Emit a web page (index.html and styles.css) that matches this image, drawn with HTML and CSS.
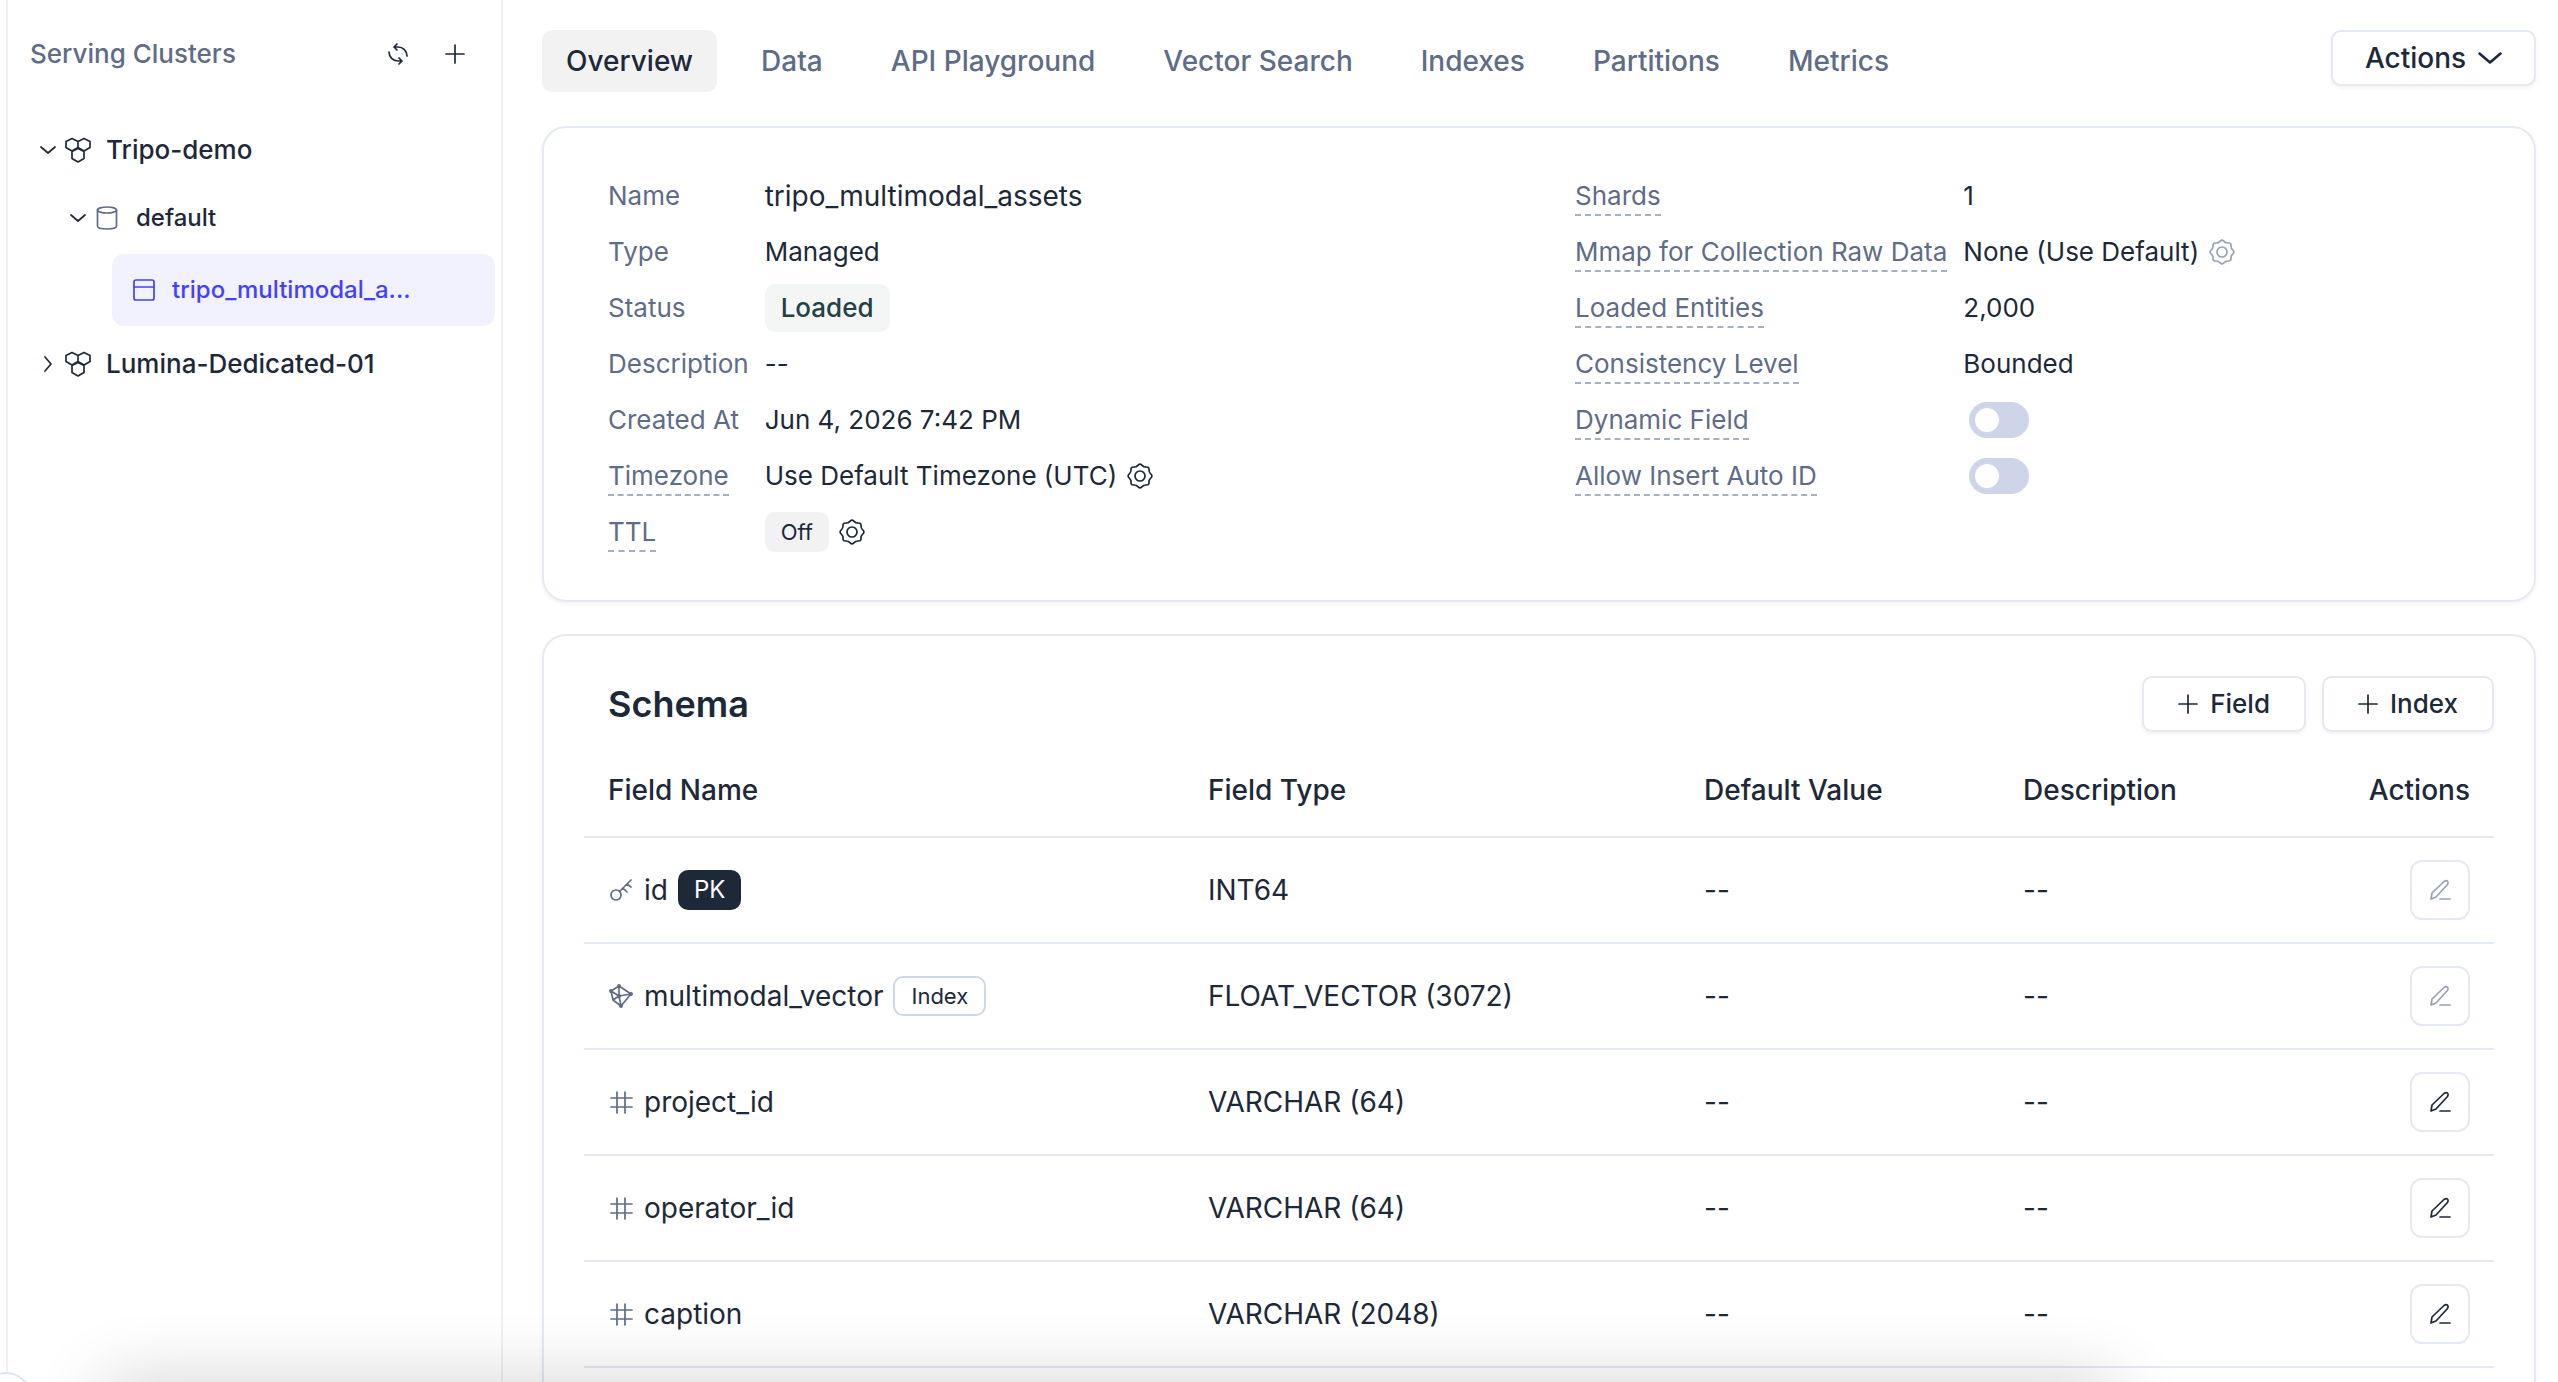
FILE: index.html
```
<!DOCTYPE html>
<html lang="en">
<head>
    <meta charset="utf-8">
    <title>tripo_multimodal_assets</title>
    <link rel="stylesheet" href="styles.css">
</head>
<body>
    <svg class="sprite" aria-hidden="true">
        <symbol id="i-down" viewBox="0 0 16 8"><path d="M1 1l7 6 7-6"/></symbol>
        <symbol id="i-right" viewBox="0 0 8 16"><path d="M1 1l6 7-6 7"/></symbol>
        <symbol id="i-plus" viewBox="0 0 20 20"><path d="M10 1v18M1 10h18"/></symbol>
        <symbol id="i-refresh" viewBox="0 0 22 22">
            <path d="M10 1L7 4l3 3M7 4h4a9 9 0 0 1 9 9M12 21l3-3-3-3M15 18h-4a9 9 0 0 1-9-9"/>
        </symbol>
        <symbol id="i-cluster" viewBox="0 0 26 26">
            <path d="M7 1.500l6 3v6L7 14l-6-3.500v-6zM19 1.500l6 3v6L19 14l-6-3.500v-6zM13 11.500l6 3v7L13 25l-6-3.500v-7z"/>
        </symbol>
        <symbol id="i-database" viewBox="0 0 22 24">
            <ellipse cx="11" cy="4" rx="9.500" ry="3"/><path d="M1.500 4v16c0 4 19 4 19 0V4"/>
        </symbol>
        <symbol id="i-table" viewBox="0 0 24 22">
            <rect x="2" y="1" width="20" height="20" rx="2"/><path d="M2 8h20"/>
        </symbol>
        <symbol id="i-gear" viewBox="0 0 26 26">
            <path d="M23.900 11.200Q26 13 23.900 14.800Q21.800 16.600 22 19.400Q22.200 22.200 19.400 22Q16.600 21.800 14.800 23.900Q13 26 11.200 23.900Q9.400 21.800 6.600 22Q3.800 22.200 4 19.400Q4.200 16.600 2.100 14.800Q0 13 2.100 11.200Q4.200 9.400 4 6.600Q3.800 3.800 6.600 4Q9.400 4.200 11.200 2.100Q13 0 14.800 2.100Q16.600 4.200 19.400 4Q22.200 3.800 22 6.600Q21.800 9.400 23.900 11.200z"/><circle cx="13" cy="13" r="5"/>
        </symbol>
        <symbol id="i-key" viewBox="0 0 24 24">
            <circle cx="7" cy="17" r="5"/><path d="M10.500 13.500L22 2M14 10l4 4M18 6l4 3"/>
        </symbol>
        <symbol id="i-vector" viewBox="0 0 24 24">
            <path d="M10 2L2 7l2 9 8 6 10-12zM10 2v10l2 10M2 7l8 5 12-2M4 16l6-4"/>
            <path class="dots" d="M10 2h0M2 7h0M22 10h0M12 22h0M10 12h0"/>
        </symbol>
        <symbol id="i-hash" viewBox="0 0 24 24"><path d="M8 2v21M16 2v21M2 8h21M2 17h21"/></symbol>
        <symbol id="i-edit" viewBox="0 0 22 22">
            <path d="M2 20l1-6L15 2.500c3-2 5 0 3.500 3L7 18zM11 20h10"/>
        </symbol>
    </svg>

    <div class="app">
        <aside class="sidebar">
            <header class="sidebar-head">
                <h1 class="sidebar-title">Serving Clusters</h1>
                <button class="icon-btn" aria-label="Refresh"><svg class="icon refresh"><use href="#i-refresh"/></svg></button>
                <button class="icon-btn" aria-label="Add cluster"><svg class="icon add"><use href="#i-plus"/></svg></button>
            </header>
            <nav class="tree">
                <a class="node" href="#">
                    <span class="caret"><svg class="icon down"><use href="#i-down"/></svg></span>
                    <svg class="icon big"><use href="#i-cluster"/></svg>
                    <span>Tripo-demo</span>
                </a>
                <a class="node node-db" href="#">
                    <span class="caret"><svg class="icon down"><use href="#i-down"/></svg></span>
                    <svg class="icon muted db"><use href="#i-database"/></svg>
                    <span>default</span>
                </a>
                <a class="node node-active" href="#">
                    <svg class="icon table-icon"><use href="#i-table"/></svg>
                    <span>tripo_multimodal_a...</span>
                </a>
                <a class="node" href="#">
                    <span class="caret"><svg class="icon right"><use href="#i-right"/></svg></span>
                    <svg class="icon big"><use href="#i-cluster"/></svg>
                    <span>Lumina-Dedicated-01</span>
                </a>
            </nav>
        </aside>

        <main class="main">
            <div class="topbar">
                <nav class="tabs">
                    <a class="tab tab-active" href="#">Overview</a>
                    <a class="tab" href="#">Data</a>
                    <a class="tab" href="#">API Playground</a>
                    <a class="tab" href="#">Vector Search</a>
                    <a class="tab" href="#">Indexes</a>
                    <a class="tab" href="#">Partitions</a>
                    <a class="tab" href="#">Metrics</a>
                </nav>
                <button class="btn btn-actions">Actions <svg class="icon actions-down"><use href="#i-down"/></svg></button>
            </div>

            <section class="card info">
                <dl class="props">
                    <dt>Name</dt><dd class="name">tripo_multimodal_assets</dd>
                    <dt>Type</dt><dd>Managed</dd>
                    <dt>Status</dt><dd><span class="badge badge-loaded">Loaded</span></dd>
                    <dt>Description</dt><dd>--</dd>
                    <dt>Created At</dt><dd>Jun 4, 2026 7:42 PM</dd>
                    <dt><span class="hint">Timezone</span></dt>
                    <dd>Use Default Timezone (UTC) <button class="icon-btn" aria-label="Edit timezone"><svg class="icon big"><use href="#i-gear"/></svg></button></dd>
                    <dt><span class="hint">TTL</span></dt>
                    <dd><span class="badge badge-off">Off</span> <button class="icon-btn" aria-label="Edit TTL"><svg class="icon big"><use href="#i-gear"/></svg></button></dd>
                </dl>
                <dl class="props">
                    <dt><span class="hint">Shards</span></dt><dd>1</dd>
                    <dt><span class="hint">Mmap for Collection Raw Data</span></dt>
                    <dd>None (Use Default) <button class="icon-btn" aria-label="Edit mmap" disabled><svg class="icon big"><use href="#i-gear"/></svg></button></dd>
                    <dt><span class="hint">Loaded Entities</span></dt><dd>2,000</dd>
                    <dt><span class="hint">Consistency Level</span></dt><dd>Bounded</dd>
                    <dt><label class="hint" for="dynamic-field">Dynamic Field</label></dt>
                    <dd><input class="switch" type="checkbox" role="switch" id="dynamic-field"></dd>
                    <dt><label class="hint" for="auto-id">Allow Insert Auto ID</label></dt>
                    <dd><input class="switch" type="checkbox" role="switch" id="auto-id"></dd>
                </dl>
            </section>

            <section class="card schema">
                <header class="schema-head">
                    <h2>Schema</h2>
                    <button class="btn btn-add"><svg class="icon add-field"><use href="#i-plus"/></svg> Field</button>
                    <button class="btn btn-add"><svg class="icon add-field"><use href="#i-plus"/></svg> Index</button>
                </header>
                <table class="fields">
                    <colgroup>
                        <col class="col-name"><col class="col-type"><col class="col-default"><col class="col-desc"><col class="col-actions">
                    </colgroup>
                    <thead>
                        <tr><th>Field Name</th><th>Field Type</th><th>Default Value</th><th>Description</th><th>Actions</th></tr>
                    </thead>
                    <tbody>
                        <tr>
                            <td><div class="field"><svg class="icon muted type"><use href="#i-key"/></svg> id <span class="badge badge-pk">PK</span></div></td>
                            <td>INT64</td><td>--</td><td>--</td>
                            <td><button class="edit" aria-label="Edit id" disabled><svg class="icon pen"><use href="#i-edit"/></svg></button></td>
                        </tr>
                        <tr>
                            <td><div class="field"><svg class="icon muted type"><use href="#i-vector"/></svg> multimodal_vector <span class="badge badge-index">Index</span></div></td>
                            <td>FLOAT_VECTOR (3072)</td><td>--</td><td>--</td>
                            <td><button class="edit" aria-label="Edit multimodal_vector" disabled><svg class="icon pen"><use href="#i-edit"/></svg></button></td>
                        </tr>
                        <tr>
                            <td><div class="field"><svg class="icon muted type"><use href="#i-hash"/></svg> project_id</div></td>
                            <td>VARCHAR (64)</td><td>--</td><td>--</td>
                            <td><button class="edit" aria-label="Edit project_id"><svg class="icon pen"><use href="#i-edit"/></svg></button></td>
                        </tr>
                        <tr>
                            <td><div class="field"><svg class="icon muted type"><use href="#i-hash"/></svg> operator_id</div></td>
                            <td>VARCHAR (64)</td><td>--</td><td>--</td>
                            <td><button class="edit" aria-label="Edit operator_id"><svg class="icon pen"><use href="#i-edit"/></svg></button></td>
                        </tr>
                        <tr>
                            <td><div class="field"><svg class="icon muted type"><use href="#i-hash"/></svg> caption</div></td>
                            <td>VARCHAR (2048)</td><td>--</td><td>--</td>
                            <td><button class="edit" aria-label="Edit caption"><svg class="icon pen"><use href="#i-edit"/></svg></button></td>
                        </tr>
                    </tbody>
                </table>
            </section>
        </main>
    </div>
    <div class="bottom-shadow"></div>
    <div class="corner-bubble"></div>
</body>
</html>
```
FILE: styles.css
```
* { box-sizing: border-box; }
body { margin: 0; height: 100vh; overflow: hidden; background: #fff; color: #1d2939; font: 26px/40px Inter, "Liberation Sans", sans-serif; }
button { font: inherit; color: inherit; cursor: pointer; }
a { color: inherit; text-decoration: none; }
h1, h2, dl, dd { margin: 0; }

.sprite { display: none; }
.icon { flex: none; width: 24px; height: 24px; fill: none; stroke: currentColor; stroke-width: 1.7; stroke-linecap: round; stroke-linejoin: round; }
.dots { stroke-width: 4; }
.muted { color: #5f6c87; }
.big { width: 26px; height: 26px; }
.down { width: 16px; height: 8px; }
.right { width: 8px; height: 16px; }
.icon-btn { display: flex; padding: 0; border: 0; background: none; }
.icon-btn:disabled { color: #98a2b3; }

.app { display: flex; height: 100vh; }

/* cluster tree */
.sidebar { flex: none; width: 497px; margin-left: 6px; padding: 34px 6px 0 22px; border-left: 2px solid #f1f1f2; border-right: 2px solid #f1f1f2; }
.sidebar-head { display: flex; align-items: center; padding-right: 30px; }
.sidebar-title { flex: 1; color: #5f6c87; font-size: 26px; font-weight: 500; line-height: 40px; }
.refresh { width: 22px; height: 22px; }
.add { width: 20px; height: 20px; margin-left: 36px; }
.tree { margin-top: 42px; font-weight: 500; }
.node { display: flex; align-items: center; height: 68px; padding-left: 8px; gap: 15px; }
.caret { display: flex; justify-content: center; width: 20px; margin-right: -8px; }
.node-db { padding-left: 38px; gap: 16px; font-size: 24px; }
.db { width: 22px; height: 24px; }
.node-db .db { margin-right: 2px; }
.node-active { height: 72px; margin: 2px 0 4px 82px; padding-left: 20px; gap: 16px; border-radius: 12px; background: #f2f2ff; color: #4340ff; font-size: 24px; }
.table-icon { height: 22px; }

/* tabs */
.main { flex: 1; min-width: 0; padding: 30px 22px 0 39px; }
.topbar { display: flex; align-items: flex-start; justify-content: space-between; }
.tabs { display: flex; gap: 20px; }
.tab { padding: 10px 24px; border-radius: 10px; color: #5f6c87; font-size: 28px; font-weight: 500; line-height: 42px; }
.tab-active { background: #f2f2f2; color: #1d2939; }

.btn { display: flex; align-items: center; justify-content: center; height: 56px; border: 2px solid #e4e9f2; border-radius: 10px; background: #fff; box-shadow: 0 2px 4px rgba(16, 24, 40, .06); font-weight: 500; }
.btn-actions { width: 205px; gap: 12px; font-size: 28px; }
.actions-down { width: 24px; height: 12px; }
.btn-add { padding: 0 34px; gap: 12px; }
.add-field { width: 20px; height: 20px; }

.card { border: 2px solid #e4e9f2; border-radius: 24px; box-shadow: 0 2px 4px rgba(16, 24, 40, .05); }

/* collection properties */
.info { display: grid; grid-template-columns: 1fr 1fr; gap: 72px; margin-top: 34px; padding: 40px 64px; }
.props { display: grid; grid-template-columns: max-content 1fr; grid-auto-rows: 56px; align-items: center; column-gap: 16px; }
.props dt { color: #5f6c87; }
.props dd { display: flex; align-items: center; gap: 10px; }
.props .name { font-size: 28px; }
.hint { display: inline-block; border-bottom: 2px dashed #a6b0c0; line-height: 36px; vertical-align: middle; }
.switch { appearance: none; width: 60px; height: 36px; margin: 0 6px; padding: 6px; border-radius: 18px; background: #cfd5e8; }
.switch::before { content: ""; display: block; width: 24px; height: 24px; border-radius: 50%; background: #fff; }

.badge { padding: 0 16px; border-radius: 10px; font-size: 22px; line-height: 40px; }
.badge-loaded { background: #f4f6f6; color: #263f46; font-size: 26px; font-weight: 500; line-height: 48px; }
.badge-off { background: #f2f2f2; }
.badge-pk { background: #1d2939; color: #fff; font-size: 24px; }
.badge-index { border: 2px solid #d0d8e5; line-height: 36px; }

/* schema */
.schema { margin-top: 32px; padding: 40px; }
.schema-head { display: flex; align-items: center; gap: 16px; padding-left: 24px; }
.schema-head h2 { flex: 1; font-size: 36px; font-weight: 600; }
.fields { width: 100%; border-collapse: collapse; table-layout: fixed; font-size: 28px; }
.fields th { height: 105px; padding: 20px 24px 8px; font-weight: 500; text-align: left; }
.fields td { height: 106px; padding: 0 24px; }
.fields tr { border-bottom: 2px solid #e4e9f2; }
.fields th:last-child { text-align: right; }
.col-name { width: 600px; }
.col-type { width: 496px; }
.col-default { width: 319px; }
.col-desc { width: 320px; }
.field { display: flex; align-items: center; gap: 10px; }
.type { width: 26px; height: 24px; }
.edit { display: flex; align-items: center; justify-content: center; width: 60px; height: 60px; margin-left: auto; padding: 0; border: 2px solid #e4e9f2; border-radius: 12px; background: #fff; }
.edit:disabled { color: #98a2b3; }
.pen { width: 22px; height: 22px; }

/* shade and bubble of the panel docked under the page */
.bottom-shadow { position: fixed; left: 100px; right: 440px; top: 100%; height: 60px; border-radius: 20px; box-shadow: 0 0 70px rgba(0, 0, 0, .19); }
.corner-bubble { position: fixed; left: -20px; bottom: -42px; width: 52px; height: 52px; border: 2px solid #dfe5ef; border-radius: 50%; background: #fff; }
```
